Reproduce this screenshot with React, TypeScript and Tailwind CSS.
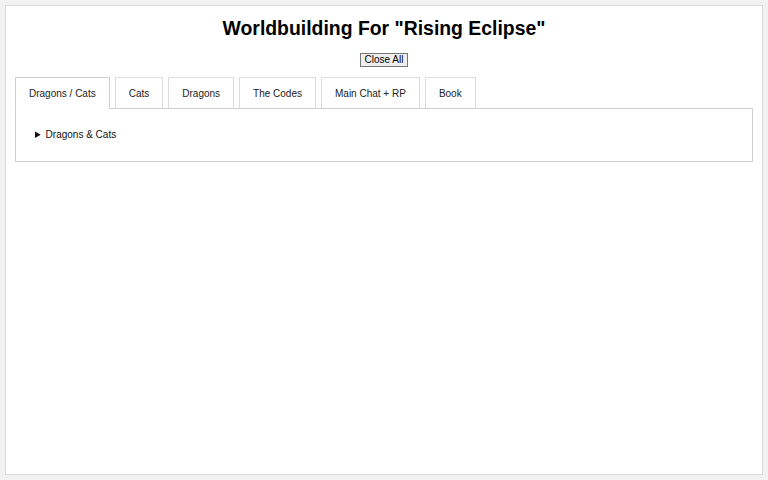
import React, { useState } from 'react';

const TABS = ['Dragons / Cats', 'Cats', 'Dragons', 'The Codes', 'Main Chat + RP', 'Book'];

export default function App() {
  const [active, setActive] = useState(0);

  return (
    <div className="h-screen w-full bg-[#f2f2f2] p-[5px] font-['Liberation_Sans',Arial,sans-serif] text-black">
      <div className="h-full bg-white border border-[#dcdcdc] px-[9px]">
        <h1 className="pt-[11px] text-center text-[19.4px] leading-[23px] font-bold">
          Worldbuilding For "Rising Eclipse"
        </h1>
        <div className="mt-[13px] flex justify-center">
          <button className="h-[14px] px-[4px] bg-[#efefef] border border-[#767676] text-[10px] leading-[12px] text-black">
            Close All
          </button>
        </div>

        <div className="mt-[10px] flex gap-[5px] relative z-10">
          {TABS.map((t, i) => (
            <button
              key={t}
              onClick={() => setActive(i)}
              className={`px-[13px] border text-[10px] text-[#222] bg-white ${
                i === active ? 'h-[32px] border-[#cfcfcf] border-b-white' : 'h-[31px] border-[#dcdcdc] border-b-0'
              }`}
            >
              {t}
            </button>
          ))}
        </div>

        <div className="-mt-px border border-[#cfcfcf] px-[19px] pt-[19px] pb-[20px]">
          <details>
            <summary className="text-[10px] leading-[13px] text-[#111] cursor-pointer">Dragons &amp; Cats</summary>
          </details>
        </div>
      </div>
    </div>
  );
}
